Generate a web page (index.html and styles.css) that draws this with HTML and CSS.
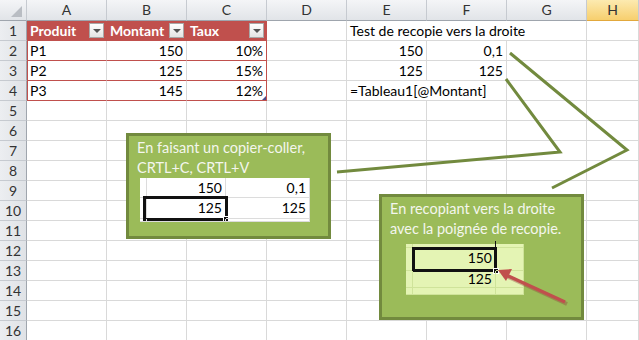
FILE: index.html
```html
<html>
  <head>
    <link rel="stylesheet" href="styles.css">
  </head>
  <body>
    <div class="sheet">
      <div class="grid">
        <div class="corner"></div>
        <div class="ch">A</div><div class="ch">B</div><div class="ch">C</div><div class="ch">D</div>
        <div class="ch">E</div><div class="ch">F</div><div class="ch">G</div><div class="ch active">H</div>

        <div class="rh">1</div>
        <div class="th first">Produit<span class="filter"></span></div>
        <div class="th">Montant<span class="filter"></span></div>
        <div class="th last">Taux<span class="filter"></span></div>
        <div></div>
        <div class="span3">Test de recopie vers la droite</div>
        <div></div>

        <div class="rh">2</div>
        <div class="td first">P1</div><div class="td num">150</div><div class="td num last">10%</div>
        <div></div><div class="num">150</div><div class="num">0,1</div><div></div><div></div>

        <div class="rh">3</div>
        <div class="td first">P2</div><div class="td num">125</div><div class="td num last">15%</div>
        <div></div><div class="num">125</div><div class="num">125</div><div></div><div></div>

        <div class="rh">4</div>
        <div class="td first">P3</div><div class="td num">145</div><div class="td num last">12%<span class="resize"></span></div>
        <div></div><div class="span2">=Tableau1[@Montant]</div><div></div><div></div>

        <div class="rh">5</div><div></div><div></div><div></div><div></div><div></div><div></div><div></div><div></div>
        <div class="rh">6</div><div></div><div></div><div></div><div></div><div></div><div></div><div></div><div></div>
        <div class="rh">7</div><div></div><div></div><div></div><div></div><div></div><div></div><div></div><div></div>
        <div class="rh">8</div><div></div><div></div><div></div><div></div><div></div><div></div><div></div><div></div>
        <div class="rh">9</div><div></div><div></div><div></div><div></div><div></div><div></div><div></div><div></div>
        <div class="rh">10</div><div></div><div></div><div></div><div></div><div></div><div></div><div></div><div></div>
        <div class="rh">11</div><div></div><div></div><div></div><div></div><div></div><div></div><div></div><div></div>
        <div class="rh">12</div><div></div><div></div><div></div><div></div><div></div><div></div><div></div><div></div>
        <div class="rh">13</div><div></div><div></div><div></div><div></div><div></div><div></div><div></div><div></div>
        <div class="rh">14</div><div></div><div></div><div></div><div></div><div></div><div></div><div></div><div></div>
        <div class="rh">15</div><div></div><div></div><div></div><div></div><div></div><div></div><div></div><div></div>
        <div class="rh">16</div><div></div><div></div><div></div><div></div><div></div><div></div><div></div><div></div>
      </div>

      <div class="callout copy">
        <div class="note">En faisant un copier-coller,<br>CRTL+C, CRTL+V</div>
        <div class="shot shot-copy">
          <div></div><div class="num">150</div><div class="num">0,1</div>
          <div></div><div class="num sel">125<span class="handle"></span></div><div class="num">125</div>
          <div></div><div></div><div></div>
        </div>
      </div>

      <div class="callout fill">
        <div class="note">En recopiant vers la droite<br>avec la poignée de recopie.</div>
        <div class="shot shot-fill">
          <div></div><div><span class="tick"></span></div><div></div>
          <div></div><div class="num sel">150<span class="handle"></span></div><div></div>
          <div></div><div class="num">125</div><div></div>
          <div></div><div></div><div></div>
        </div>
      </div>

      <svg class="lines" width="639" height="340" viewBox="0 0 639 340">
        <polyline points="337,172 560,152 506,79" fill="none" stroke="#728a3e" stroke-width="3"/>
        <polyline points="510,53 627,150 552,188" fill="none" stroke="#728a3e" stroke-width="3"/>
        <line x1="567" y1="304" x2="506" y2="276" stroke="#8c3a38" stroke-width="4" opacity="0.35"/>
        <line x1="565" y1="302" x2="504" y2="274" stroke="#c0504d" stroke-width="3.5"/>
        <polygon points="498,270 512,269 506,281" fill="#c0504d"/>
      </svg>
    </div>
  </body>
</html>
```

FILE: styles.css
```css
body,
html {
  margin: 0;
  background: #fff;
}
* {
  box-sizing: border-box;
}
body {
  font-family: Lato, 'Liberation Sans', sans-serif;
  font-size: 14px;
  color: #000;
}
.sheet {
  position: relative;
  width: 639px;
  height: 340px;
  overflow: hidden;
}
.grid {
  display: grid;
  grid-template-columns: 27px repeat(7, 80px) 52px;
  grid-template-rows: 21px repeat(16, 20px);
}
.grid > div {
  position: relative;
  border-right: 1px solid #d9d9d9;
  border-bottom: 1px solid #d9d9d9;
  line-height: 19px;
  padding: 0 3px;
  white-space: nowrap;
}
.num {
  text-align: right;
}
.span3 {
  grid-column: span 3;
}
.span2 {
  grid-column: span 2;
}

/* headers */
.grid > .corner,
.grid > .ch {
  background: linear-gradient(#f4f5f7, #e1e4e8);
  border-right-color: #c6cad0;
  border-bottom-color: #9fa5ad;
  text-align: center;
  color: #333;
  line-height: 20px;
}
.grid > .ch.active {
  background: linear-gradient(#fceab0, #f7cf6e);
  border-bottom-color: #e2a83c;
}
.corner::after {
  content: '';
  position: absolute;
  right: 4px;
  bottom: 3px;
  border-left: 11px solid transparent;
  border-bottom: 11px solid #b9bdc3;
}
.grid > .rh {
  background: linear-gradient(90deg, #eceef1, #dfe2e6);
  border-right-color: #9fa5ad;
  border-bottom-color: #c6cad0;
  text-align: center;
  color: #333;
  padding: 0;
}

/* table */
.grid > .th {
  background: #c0504d;
  color: #fff;
  font-weight: bold;
  border-right-color: #c0504d;
  border-bottom-color: #c0504d;
}
.grid > .td {
  border-bottom-color: #c0504d;
}
.grid > .first {
  box-shadow: inset 1px 0 #c0504d;
}
.grid > .last {
  border-right-color: #c0504d;
}
.filter {
  position: absolute;
  right: 2px;
  top: 2px;
  width: 15px;
  height: 15px;
  background: linear-gradient(#ffffff, #e4e4e4);
  border: 1px solid #a8a8a8;
}
.filter::after {
  content: '';
  position: absolute;
  left: 3px;
  top: 5px;
  border-left: 4px solid transparent;
  border-right: 4px solid transparent;
  border-top: 4px solid #555;
}
.resize {
  position: absolute;
  right: 0;
  bottom: 0;
  border-left: 4px solid transparent;
  border-bottom: 4px solid #4b4a8c;
}

/* callouts */
.callout {
  position: absolute;
  display: flex;
  flex-direction: column;
  align-items: flex-start;
  background: #9bbb59;
  border: 3px solid #728a3e;
  color: #f4f6ee;
  font-size: 14.5px;
}
.note {
  line-height: 20px;
  padding: 2px 0 0 8px;
}
.copy {
  left: 126px;
  top: 133px;
  width: 205px;
  height: 106px;
}
.fill {
  left: 379px;
  top: 194px;
  width: 205px;
  height: 126px;
}
.shot {
  display: grid;
  color: #000;
  font-size: 14px;
}
.shot > div {
  position: relative;
  border-right: 1px solid #dcdcdc;
  border-bottom: 1px solid #dcdcdc;
  padding: 0 3px;
  line-height: 19px;
}
.shot-copy {
  margin: 0 0 0 11px;
  width: 170px;
  background: #fff;
  grid-template-columns: 5px 81px 1fr;
  grid-template-rows: 20px 21px 3px;
}
.shot-fill {
  margin: 5px 0 0 24px;
  width: 118px;
  height: 51px;
  background: #e4f4b4;
  grid-template-columns: 7px 83px 1fr;
  grid-template-rows: 4px 23px 17px 1fr;
}
.shot-fill > div {
  border-color: #cfe39a;
  line-height: 20px;
}
.shot-fill > div:nth-child(n+7) {
  line-height: 16px;
}
.shot > .sel {
  outline: 3px solid #111;
  outline-offset: -1px;
}
.shot-fill > .sel {
  outline-offset: -2px;
}
.handle {
  position: absolute;
  right: -4px;
  bottom: -4px;
  width: 6px;
  height: 6px;
  background: #111;
  border: 1px solid #fff;
}
.tick {
  position: absolute;
  right: -1px;
  top: -3px;
  width: 1px;
  height: 7px;
  background: #111;
}
.lines {
  position: absolute;
  left: 0;
  top: 0;
}
```
